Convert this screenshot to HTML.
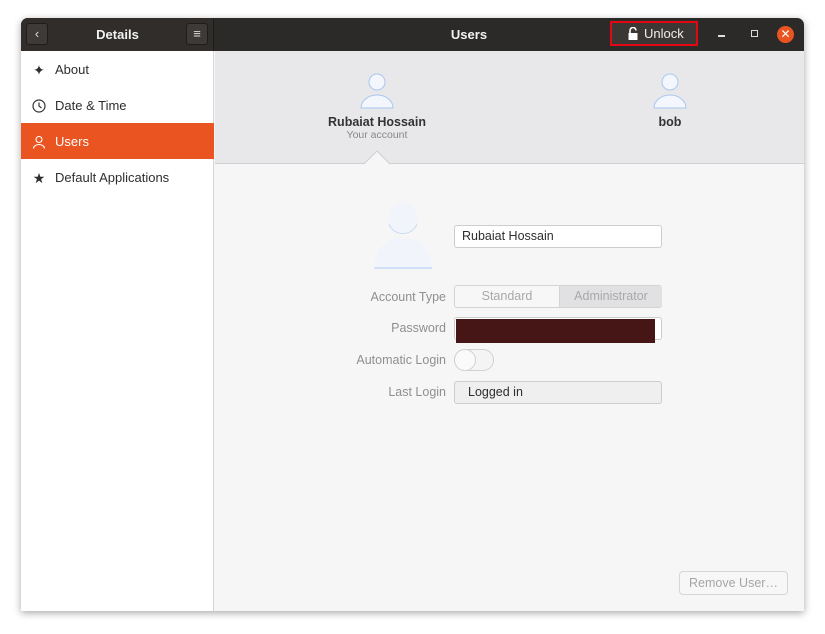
<!DOCTYPE html>
<html><head><meta charset="utf-8"><style>
*{box-sizing:border-box;margin:0;padding:0}
body{width:825px;height:634px;background:#fff;font-family:"Liberation Sans","DejaVu Sans",sans-serif;position:relative;overflow:hidden;font-size:13px}
.win{position:absolute;left:21px;top:18px;width:783px;height:593px;box-shadow:0 2px 8px rgba(0,0,0,.35);border-radius:7px 7px 0 0;overflow:hidden;background:#f6f6f7}
.tb{position:absolute;left:0;top:0;width:783px;height:33px;background:#2c2a28;color:#fff}
.tbl{position:absolute;left:0;top:0;width:193px;height:33px;background:#302d2b;border-right:1px solid #1c1b1a}
.btn{position:absolute;top:5px;width:22px;height:22px;background:#3d3a37;border:1px solid #1e1d1c;border-radius:3px;color:#ddd;text-align:center;line-height:20px;font-size:13px}
.side{position:absolute;left:0;top:33px;width:193px;height:560px;background:#fff;border-right:1px solid #d6d6d6}
.item{position:absolute;left:0;width:193px;height:36px;line-height:38px;padding-left:34px;color:#2e2e2e;font-size:13px}
.item .ic{position:absolute;left:11px;top:0;width:14px;text-align:center;font-size:14px}
.sel{background:#e95420;color:#fff}
.strip{position:absolute;left:194px;top:33px;width:589px;height:113px;background:#e8e8eb;border-bottom:1px solid #cfcfd2}
.lbl{position:absolute;color:#8f8f8f;font-size:12.5px;text-align:right;width:120px}
.fld{position:absolute;left:433px;width:208px;height:23px;border:1px solid #cdcdcd;border-radius:3px;background:#fff;font-size:12.5px;line-height:21px;padding-left:7px;color:#2e2e2e}
</style></head><body>
<div class="win">
 <div class="tb">
  <div class="tbl">
   <div class="btn" style="left:5px">&#x2039;</div>
   <div style="position:absolute;left:0;width:193px;top:0;line-height:33px;text-align:center;font-weight:bold;font-size:13px;color:#f2f2f2">Details</div>
   <div class="btn" style="left:165px">&#8801;</div>
  </div>
  <div style="position:absolute;left:448px;width:80px;margin-left:-40px;top:0;line-height:33px;text-align:center;font-weight:bold;font-size:13px;color:#f2f2f2">Users</div>
  <div style="position:absolute;left:589px;top:3px;width:88px;height:25px;border:2px solid #e30613;background:#3a3735;color:#eee;font-size:13px;line-height:21px;padding-left:32px">
   <svg style="position:absolute;left:16px;top:4px" width="10" height="13" viewBox="0 0 10 13"><path d="M2 6V3.5a3 3 0 0 1 6 0" fill="none" stroke="#fff" stroke-width="1.6"/><rect x="0.5" y="6" width="9" height="7" fill="#fff"/></svg>Unlock</div>
  <div style="position:absolute;left:697px;top:17px;width:7px;height:1.5px;background:#ddd"></div>
  <div style="position:absolute;left:730px;top:12px;width:7px;height:7px;border:1.5px solid #ddd"></div>
  <div style="position:absolute;left:756px;top:8px;width:17px;height:17px;border-radius:50%;background:#e95420;color:#fff;text-align:center;line-height:17px;font-size:12px">&#x2715;</div>
 </div>
 <div class="side">
  <div class="item" style="top:0"><span class="ic">&#x2726;</span>About</div>
  <div class="item" style="top:36px"><span class="ic"><svg width="14" height="14" viewBox="0 0 14 14" style="vertical-align:-2px"><circle cx="7" cy="7" r="6" fill="none" stroke="#333" stroke-width="1.2"/><path d="M7 3.5V7l2.5 2" fill="none" stroke="#333" stroke-width="1.2"/></svg></span>Date &amp; Time</div>
  <div class="item sel" style="top:72px"><span class="ic"><svg width="14" height="14" viewBox="0 0 14 14" style="vertical-align:-2px"><circle cx="7" cy="4.5" r="3" fill="none" stroke="#fff" stroke-width="1.1"/><path d="M1.5 13.5a5.5 4 0 0 1 11 0" fill="none" stroke="#fff" stroke-width="1.1"/></svg></span>Users</div>
  <div class="item" style="top:108px"><span class="ic">&#x2605;</span>Default Applications</div>
 </div>
 <div class="strip">
  <svg style="position:absolute;left:145px;top:22px" width="34" height="36" viewBox="0 0 34 36"><circle cx="17" cy="9" r="8" fill="#f3f6fc" stroke="#a9c7ee" stroke-width="1"/><path d="M1 35a16 13 0 0 1 32 0z" fill="#f3f6fc" stroke="#a9c7ee" stroke-width="1"/></svg>
  <div style="position:absolute;left:82px;width:160px;top:64px;text-align:center;font-weight:bold;font-size:12.5px;color:#333">Rubaiat Hossain</div>
  <div style="position:absolute;left:82px;width:160px;top:78px;text-align:center;font-size:10.5px;color:#888">Your account</div>
  <svg style="position:absolute;left:438px;top:22px" width="34" height="36" viewBox="0 0 34 36"><circle cx="17" cy="9" r="8" fill="#f3f6fc" stroke="#a9c7ee" stroke-width="1"/><path d="M1 35a16 13 0 0 1 32 0z" fill="#f3f6fc" stroke="#a9c7ee" stroke-width="1"/></svg>
  <div style="position:absolute;left:415px;width:80px;top:64px;text-align:center;font-weight:bold;font-size:12.5px;color:#333">bob</div>
  <svg style="position:absolute;left:149px;top:99px" width="26" height="15" viewBox="0 0 26 15"><path d="M0 14L13 1L26 14" fill="#f6f6f7" stroke="#cfcfd2"/><rect x="0" y="14" width="26" height="2" fill="#f6f6f7"/></svg>
 </div>
 <svg style="position:absolute;left:352px;top:184px" width="62" height="68" viewBox="0 0 62 68"><circle cx="30" cy="16" r="15" fill="#f1f4fa"/><path d="M16 22a15 15 0 0 0 28 0" fill="none" stroke="#c6daf5" stroke-width="1"/><path d="M1 66C1 48 12 36 30 36S59 48 59 66z" fill="#f1f4fa"/><path d="M1 66h58" stroke="#c6daf5" stroke-width="1.5"/></svg>
 <div class="fld" style="top:207px">Rubaiat Hossain</div>
 <div class="lbl" style="left:305px;top:272px">Account Type</div>
 <div style="position:absolute;left:433px;top:267px;width:208px;height:23px;border:1px solid #d4d4d4;border-radius:3px;background:#f7f7f7;font-size:12.5px;color:#a8a8a8;line-height:21px">
  <div style="position:absolute;left:0;width:104px;text-align:center">Standard</div>
  <div style="position:absolute;left:104px;width:103px;height:21px;background:#e1e1e3;border-left:1px solid #d4d4d4;text-align:center">Administrator</div>
 </div>
 <div class="lbl" style="left:305px;top:303px">Password</div>
 <div class="fld" style="top:299px"></div>
 <div style="position:absolute;left:435px;top:301px;width:199px;height:24px;background:#461616"></div>
 <div class="lbl" style="left:305px;top:335px">Automatic Login</div>
 <div style="position:absolute;left:433px;top:331px;width:40px;height:22px;border:1px solid #d0d0d0;border-radius:11px;background:#f4f4f4"><div style="position:absolute;left:-1px;top:-1px;width:22px;height:22px;border-radius:50%;border:1px solid #d0d0d0;background:#fafafa"></div></div>
 <div class="lbl" style="left:305px;top:367px">Last Login</div>
 <div class="fld" style="top:363px;background:#efeff0;padding-left:13px">Logged in</div>
 <div style="position:absolute;left:658px;top:553px;width:109px;height:24px;border:1px solid #d6d6d6;border-radius:4px;background:#f7f7f8;color:#a5a5a5;font-size:12.5px;text-align:center;line-height:22px">Remove User…</div>
</div>
</body></html>
